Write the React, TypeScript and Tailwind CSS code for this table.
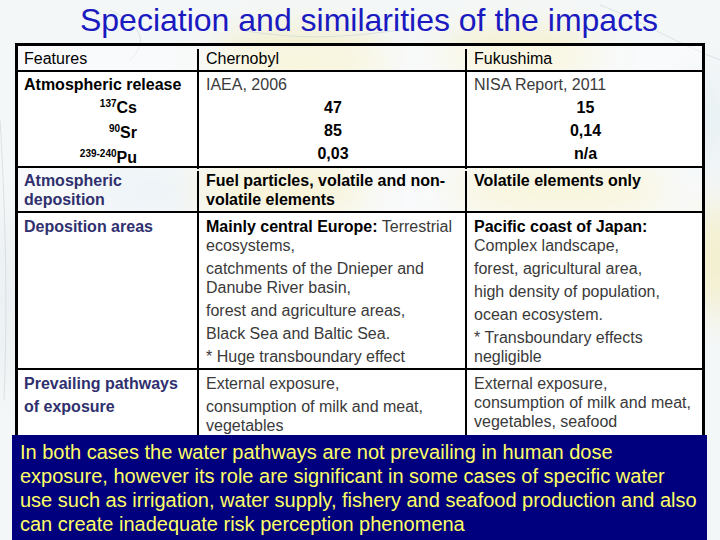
import type { ReactNode } from "react";

// faint map behind the slide
function MapBackdrop() {
  return (
    <svg className="absolute inset-0" width="720" height="540" viewBox="0 0 720 540">
      <defs>
        <filter id="soft" x="-50%" y="-50%" width="200%" height="200%">
          <feGaussianBlur stdDeviation="18" />
        </filter>
      </defs>
      <g filter="url(#soft)" opacity="0.75">
        <ellipse cx="300" cy="60" rx="90" ry="30" fill="#f3ecb4" />
        <ellipse cx="520" cy="55" rx="80" ry="25" fill="#f6eeb8" />
        <ellipse cx="150" cy="190" rx="60" ry="25" fill="#d8e6f0" />
        <ellipse cx="280" cy="190" rx="90" ry="28" fill="#f3e9a6" />
        <ellipse cx="560" cy="190" rx="110" ry="30" fill="#f6edb6" />
        <ellipse cx="715" cy="260" rx="20" ry="60" fill="#f4eab0" />
        <ellipse cx="700" cy="120" rx="30" ry="50" fill="#e4eef2" />
        <ellipse cx="10" cy="300" rx="20" ry="90" fill="#e6ecee" />
      </g>
      <g stroke="#c9d3d8" strokeWidth="1" fill="none" opacity="0.6">
        <path d="M110 10 C140 25 150 40 130 60" />
        <path d="M240 30 C300 40 340 38 400 30" />
        <path d="M600 5 C640 20 680 45 720 60" />
        <path d="M0 120 C5 200 8 300 4 400" />
      </g>
    </svg>
  );
}

function Cell({ children, first, className = "" }: { children?: ReactNode; first?: boolean; className?: string }) {
  return (
    <div className={`${first ? "px-[6px]" : "border-l-2 border-black pl-[7px] pr-[5px]"} ${className}`}>
      {children}
    </div>
  );
}

const row = "grid grid-cols-[179px_268px_237px]";
const label = "font-bold text-[#30306e]";
const body = "text-[#3a3a3a]";

function Iso({ mass, el }: { mass: string; el: string }) {
  return (
    <p className="font-bold text-black">
      <span className="relative top-[-6px] text-[10px]">{mass}</span>
      {el}
    </p>
  );
}

export default function App() {
  return (
    <div className="relative w-[720px] h-[540px] overflow-hidden bg-[#f4f7f8] font-['Liberation_Sans',Arial,sans-serif]">
      <MapBackdrop />
      <div className="relative">
        <h1 className="h-[43px] pt-[1px] pl-[18px] text-center text-[32px] leading-[38px] text-[#1a1ac0]">
          Speciation and similarities of the impacts
        </h1>

        <div className="ml-[15px] w-[690px] border-[3px] border-black text-[16px] leading-[19px]">
          {/* header */}
          <div className={`${row} h-[24px] bg-white/40 pt-[3px] text-black`}>
            <Cell first>Features</Cell>
            <Cell>Chernobyl</Cell>
            <Cell>Fukushima</Cell>
          </div>

          {/* atmospheric release */}
          <div className={`${row} h-[96px] border-t-2 border-black bg-white`}>
            <Cell first className="flex flex-col gap-[4px] pt-[3px]">
              <p className="font-bold text-black">Atmospheric release</p>
              <div className="flex flex-col gap-[4px] pr-[54px] text-right">
                <Iso mass="137" el="Cs" />
                <Iso mass="90" el="Sr" />
                <Iso mass="239-240" el="Pu" />
              </div>
            </Cell>
            <Cell className="flex flex-col gap-[4px] pt-[3px]">
              <p className={body}>IAEA, 2006</p>
              <p className="text-center font-bold text-black">47</p>
              <p className="text-center font-bold text-black">85</p>
              <p className="text-center font-bold text-black">0,03</p>
            </Cell>
            <Cell className="flex flex-col gap-[4px] pt-[3px]">
              <p className={body}>NISA Report, 2011</p>
              <p className="text-center font-bold text-black">15</p>
              <p className="text-center font-bold text-black">0,14</p>
              <p className="text-center font-bold text-black">n/a</p>
            </Cell>
          </div>

          {/* atmospheric deposition */}
          <div className={`${row} h-[45px] border-t-2 border-black bg-white/40 pt-[3px]`}>
            <Cell first>
              <p className={label}>
                Atmospheric
                <br />
                deposition
              </p>
            </Cell>
            <Cell>
              <p className="font-bold text-black">
                Fuel particles, volatile and non-
                <br />
                volatile elements
              </p>
            </Cell>
            <Cell>
              <p className="font-bold text-black">Volatile elements only</p>
            </Cell>
          </div>

          {/* deposition areas */}
          <div className={`${row} h-[157px] border-t-2 border-black bg-white`}>
            <Cell first className="pt-[4px]">
              <p className={label}>Deposition areas</p>
            </Cell>
            <Cell className={`flex flex-col gap-[4px] pt-[4px] ${body}`}>
              <p>
                <span className="font-bold text-black">Mainly central Europe:</span> Terrestrial
                <br />
                ecosystems,
              </p>
              <p>
                catchments of the Dnieper and
                <br />
                Danube River basin,
              </p>
              <p>forest and agriculture areas,</p>
              <p>Black Sea and Baltic Sea.</p>
              <p>* Huge transboundary effect</p>
            </Cell>
            <Cell className={`flex flex-col gap-[4px] pt-[4px] ${body}`}>
              <p>
                <span className="font-bold text-black">Pacific coast of Japan:</span>
                <br />
                Complex landscape,
              </p>
              <p>forest, agricultural area,</p>
              <p>high density of population,</p>
              <p>ocean ecosystem.</p>
              <p>
                * Transboundary effects
                <br />
                negligible
              </p>
            </Cell>
          </div>

          {/* pathways */}
          <div className={`${row} h-[72px] border-t-2 border-black bg-white`}>
            <Cell first className="flex flex-col gap-[4px] pt-[4px]">
              <p className={label}>Prevailing pathways</p>
              <p className={label}>of exposure</p>
            </Cell>
            <Cell className={`flex flex-col gap-[4px] pt-[4px] ${body}`}>
              <p>External exposure,</p>
              <p>
                consumption of milk and meat,
                <br />
                vegetables
              </p>
            </Cell>
            <Cell className={`pt-[4px] ${body}`}>
              <p>
                External exposure,
                <br />
                consumption of milk and meat,
                <br />
                vegetables, seafood
              </p>
            </Cell>
          </div>
        </div>
      </div>

      <div className="absolute left-[12px] top-[435px] h-[105px] w-[695px] bg-[#00007e] pl-[8px] pt-[5px] text-[20px] leading-[24px] text-[#ffff66] whitespace-nowrap">
        In both cases the water pathways are not prevailing in human dose
        <br />
        exposure, however its role are significant in some cases of specific water
        <br />
        use such as irrigation, water supply, fishery and seafood production and also
        <br />
        can create inadequate risk perception phenomena
      </div>
    </div>
  );
}
